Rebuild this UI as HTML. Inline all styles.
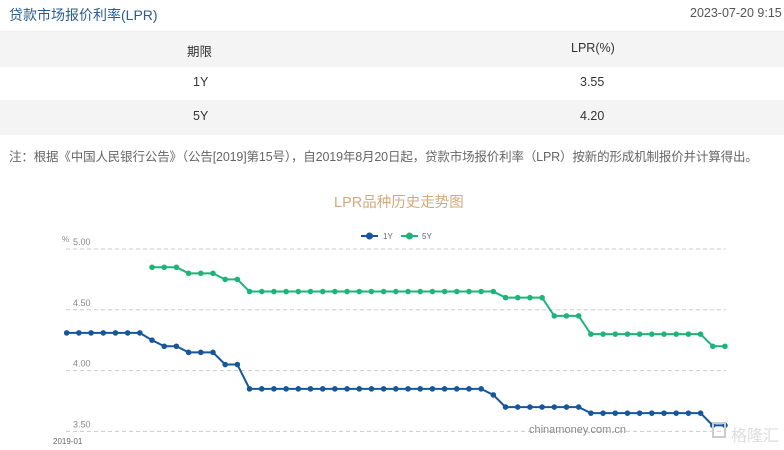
<!DOCTYPE html>
<html><head><meta charset="utf-8"><style>
body{margin:0;width:784px;height:450px;background:#fff;font-family:"Liberation Sans","Noto Sans CJK SC",sans-serif;overflow:hidden;position:relative}
.a{position:absolute;white-space:nowrap}
</style></head><body>
<div class="a" style="left:9px;top:5px;font-size:14px;color:#2b5c94">贷款市场报价利率(LPR)</div>
<div class="a" style="left:690px;top:6px;font-size:12.5px;color:#555">2023-07-20 9:15</div>
<div class="a" style="left:0;top:31px;width:784px;height:1px;background:#eee"></div>
<div class="a" style="left:0;top:32px;width:784px;height:35px;background:#f4f4f4"></div>
<div class="a" style="left:0;top:100px;width:784px;height:35px;background:#f4f4f4"></div>
<div class="a" style="left:187px;top:41px;font-size:12.5px;color:#333">期限</div>
<div class="a" style="left:571px;top:41px;font-size:12.5px;color:#333">LPR(%)</div>
<div class="a" style="left:193px;top:75px;font-size:12.5px;color:#333">1Y</div>
<div class="a" style="left:580px;top:75px;font-size:12.5px;color:#333">3.55</div>
<div class="a" style="left:193px;top:109px;font-size:12.5px;color:#333">5Y</div>
<div class="a" style="left:580px;top:109px;font-size:12.5px;color:#333">4.20</div>
<div class="a" style="left:9px;top:146px;font-size:12.5px;letter-spacing:-0.15px;color:#666">注：根据《中国人民银行公告》（公告[2019]第15号），自2019年8月20日起，贷款市场报价利率（LPR）按新的形成机制报价并计算得出。</div>
<div class="a" style="left:334px;top:191px;font-size:14.5px;color:#d4a97a">LPR品种历史走势图</div>
<svg class="a" style="left:0;top:0" width="784" height="450" id="s"></svg>
<script>
var s=document.getElementById('s'),h='';
function Y(v){return 249+(5-v)*121.6}
function X(i){return 66.7+i*12.19}
[5,4.5,4,3.5].forEach(function(v){var y=Y(v);h+='<line x1="66" x2="726" y1="'+y+'" y2="'+y+'" stroke="#ccc" stroke-dasharray="4,3"/>';h+='<text x="73" y="'+(y-4)+'" font-size="9" fill="#888" font-family="Liberation Sans">'+v.toFixed(2)+'</text>';});
h+='<text x="62" y="242" font-size="8" fill="#888">%</text><text x="53" y="444" font-size="8" fill="#666">2019-01</text>';
function rep(a,v,n){for(var i=0;i<n;i++)a.push(v);return a}
var a=[];rep(a,4.31,7);a.push(4.25,4.2,4.2,4.15,4.15,4.15,4.05,4.05);rep(a,3.85,20);a.push(3.8);rep(a,3.7,7);rep(a,3.65,10);a.push(3.55,3.55);
var b=[];rep(b,4.85,3);rep(b,4.8,3);rep(b,4.75,2);rep(b,4.65,21);rep(b,4.6,4);rep(b,4.45,3);rep(b,4.3,10);b.push(4.2,4.2);
function draw(d,off,c){var p=d.map(function(v,i){return X(i+off)+','+Y(v)}).join(' ');h+='<polyline points="'+p+'" fill="none" stroke="'+c+'" stroke-width="2"/>';d.forEach(function(v,i){h+='<circle cx="'+X(i+off)+'" cy="'+Y(v)+'" r="2.8" fill="'+c+'"/>'})}
draw(b,55-b.length,'#1db47a');draw(a,0,'#16579b');
h+='<line x1="361" x2="378" y1="236" y2="236" stroke="#16579b" stroke-width="2"/><circle cx="369.5" cy="236" r="3.5" fill="#16579b"/><text x="383" y="239" font-size="8" fill="#666">1Y</text>';
h+='<line x1="401" x2="418" y1="236" y2="236" stroke="#1db47a" stroke-width="2"/><circle cx="409.5" cy="236" r="3.5" fill="#1db47a"/><text x="422" y="239" font-size="8" fill="#666">5Y</text>';
h+='<text x="529" y="433" font-size="11" fill="#888">chinamoney.com.cn</text>';
h+='<rect x="713" y="423" width="12" height="14" fill="none" stroke="#ccc" stroke-width="2"/><text x="731" y="441" font-size="16" fill="#ddd" font-family="Noto Sans CJK SC">格隆汇</text>';
s.innerHTML=h;
</script>
</body></html>
